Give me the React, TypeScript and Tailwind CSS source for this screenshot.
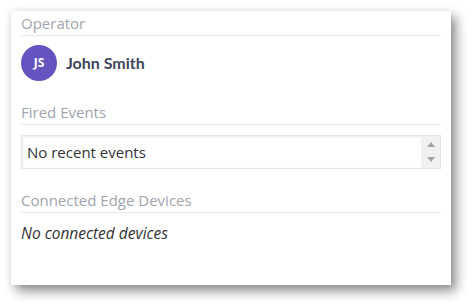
import React from 'react'

const font = { fontFamily: '"Open Sans", "Noto Sans", sans-serif' }

function SectionTitle({ children }: { children: React.ReactNode }) {
  return (
    <div className="text-[15px] leading-5 pb-[2px] text-[#a0a5ad] border-b border-[#e8e8e8]">
      {children}
    </div>
  )
}

export default function App() {
  return (
    <div className="w-[474px] h-[308px] bg-white p-[11px]" style={font}>
      <div className="w-[440px] h-[274px] bg-white px-[10px] pt-[2px] flex flex-col shadow-[5px_6px_11px_rgba(0,0,0,0.45),0_0_6px_rgba(0,0,0,0.08)]">
        <SectionTitle>Operator</SectionTitle>

        <div className="flex items-center mt-[9px] h-9">
          <div className="w-9 h-9 rounded-full bg-[#6554c0] flex items-center justify-center text-white text-[12px] font-bold">
            JS
          </div>
          <span className="ml-[9px] text-[16px] font-bold text-[#3f4559] font-['Lato',sans-serif]">John Smith</span>
        </div>

        <div className="mt-[21px]">
          <SectionTitle>Fired Events</SectionTitle>
        </div>

        <div className="mt-[10px] h-[34px] flex border border-[#e4e4e4] shadow-[inset_1px_1px_2px_rgba(0,0,0,0.08)]">
          <div className="flex-1 flex items-center pl-[5px] text-[15px] text-[#333]">No recent events</div>
          <div className="w-[19px] bg-[#f1f1f1] flex flex-col items-center justify-between py-[6px]">
            <svg width="8" height="5" viewBox="0 0 8 5"><path d="M4 0L8 5H0z" fill="#a3a3a3" /></svg>
            <svg width="8" height="5" viewBox="0 0 8 5"><path d="M0 0H8L4 5z" fill="#a3a3a3" /></svg>
          </div>
        </div>

        <div className="mt-[21px]">
          <SectionTitle>Connected Edge Devices</SectionTitle>
        </div>

        <div className="mt-[8px] text-[15.5px] leading-6 italic text-[#333]">No connected devices</div>
      </div>
    </div>
  )
}
